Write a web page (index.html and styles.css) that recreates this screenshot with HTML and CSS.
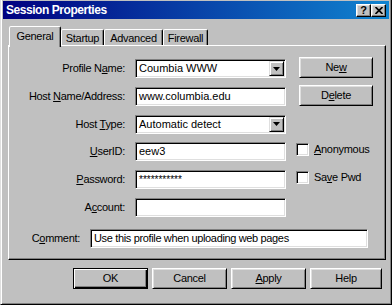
FILE: index.html
```html
<!DOCTYPE html>
<html>
<head>
<meta charset="utf-8">
<link rel="stylesheet" href="styles.css">
</head>
<body>
<div class="window">
  <div class="titlebar">
    <span class="title">Session Properties</span>
    <div class="tbtns">
      <span class="tbtn help">?</span>
      <span class="tbtn close"><svg width="8" height="7" viewBox="0 0 8 7"><path d="M0.5 0 L7.5 7 M7.5 0 L0.5 7" stroke="#000" stroke-width="1.7" fill="none"/></svg></span>
    </div>
  </div>
  <div class="tabs">
    <div class="tab active t-general">General</div>
    <div class="tab t-startup">Startup</div>
    <div class="tab t-advanced">Advanced</div>
    <div class="tab t-firewall">Firewall</div>
  </div>
  <div class="panel">
    <div class="grid">
      <label class="lbl">Profile N<u>a</u>me:</label>
      <div class="field combo"><span class="val">Coumbia WWW</span><span class="drop"><svg width="7" height="4" viewBox="0 0 7 4"><polygon points="0,0 7,0 3.5,4" fill="#000"/></svg></span></div>
      <div class="btn side">Ne<u>w</u></div>

      <label class="lbl">Host <u>N</u>ame/Address:</label>
      <div class="field"><span class="val">www.columbia.edu</span></div>
      <div class="btn side">D<u>e</u>lete</div>

      <label class="lbl">Host <u>T</u>ype:</label>
      <div class="field combo"><span class="val">Automatic detect</span><span class="drop"><svg width="7" height="4" viewBox="0 0 7 4"><polygon points="0,0 7,0 3.5,4" fill="#000"/></svg></span></div>
      <div></div>

      <label class="lbl"><u>U</u>serID:</label>
      <div class="field"><span class="val">eew3</span></div>
      <div class="check"><span class="box"></span><span><u>A</u>nonymous</span></div>

      <label class="lbl"><u>P</u>assword:</label>
      <div class="field"><span class="val pw">***********</span></div>
      <div class="check"><span class="box"></span><span>Sa<u>v</u>e Pwd</span></div>

      <label class="lbl">A<u>c</u>count:</label>
      <div class="field"></div>
      <div></div>
    </div>
    <div class="comment-row">
      <label class="lbl comment-lbl">C<u>o</u>mment:</label>
      <div class="field comment"><span class="val comment-val">Use this profile when uploading web pages</span></div>
    </div>
  </div>
  <div class="actions">
    <div class="btn act default">OK</div>
    <div class="btn act">Cancel</div>
    <div class="btn act"><u>A</u>pply</div>
    <div class="btn act act-help">Help</div>
  </div>
</div>
</body>
</html>
```
FILE: styles.css
```css
* { box-sizing: border-box; }
html, body { margin: 0; padding: 0; }
body {
  width: 392px;
  height: 305px;
  overflow: hidden;
  background: #c0c0c0;
  font-family: "Liberation Sans", Arial, sans-serif;
  font-size: 11px;
  line-height: 13px;
  color: #000;
  letter-spacing: -0.3px;
}
.window {
  width: 392px;
  height: 305px;
  background: #c0c0c0;
  border: 1px solid;
  border-color: #dfdfdf #000 #000 #dfdfdf;
  border-top: 0;
  box-shadow: inset 1px 0 #fff, inset -1px -1px #808080;
  padding: 1px 2px 0 2px;
  display: flex;
  flex-direction: column;
}
.titlebar {
  height: 18px;
  background: linear-gradient(to right, #000080, #1084d0);
  display: flex;
  align-items: center;
  justify-content: space-between;
  padding: 0 3px 0 3px;
  color: #fff;
}
.title {
  font-weight: bold;
  font-size: 12px;
  letter-spacing: -0.45px;
}
.tbtns { display: flex; }
.tbtn {
  width: 15px;
  height: 13px;
  background: #c0c0c0;
  border: 1px solid;
  border-color: #fff #000 #000 #fff;
  box-shadow: inset -1px -1px #808080, inset 1px 1px #dfdfdf;
  display: flex;
  align-items: center;
  justify-content: center;
  color: #000;
}
.tbtn.help {
  font-weight: bold;
  font-size: 11px;
  line-height: 11px;
  letter-spacing: 0;
}
.tbtn svg { display: block; }
.tabs {
  margin-top: 7px;
  height: 19px;
  display: flex;
  align-items: flex-end;
  padding-left: 6px;
}
.tab {
  height: 16px;
  border: 1px solid;
  border-bottom: 0;
  border-color: #fff #000 transparent #fff;
  border-radius: 2px 2px 0 0;
  box-shadow: inset -1px 0 #808080;
  background: #c0c0c0;
  text-align: center;
  padding-top: 2px;
}
.tab.active {
  height: 21px;
  margin-bottom: -2px;
  padding-top: 3px;
  position: relative;
  z-index: 1;
}
.t-general { width: 52px; }
.t-startup { width: 43px; }
.t-advanced { width: 59px; }
.t-firewall { width: 45px; }
.panel {
  margin: 0 3px 0 5px;
  border: 1px solid;
  border-color: #fff #000 #000 #fff;
  box-shadow: inset -1px -1px #808080;
  padding: 13px 0 11px 0;
}
.grid {
  display: grid;
  grid-template-columns: 116px 151px 1fr;
  column-gap: 10px;
  grid-auto-rows: 19px;
  row-gap: 8.8px;
}
.lbl {
  text-align: right;
  align-self: center;
  white-space: nowrap;
}
.field {
  height: 19px;
  background: #fff;
  border: 1px solid;
  border-color: #808080 #fff #fff #808080;
  box-shadow: inset 1px 1px #000, inset -1px -1px #dfdfdf;
  padding: 1px 1px 1px 3px;
  display: flex;
  align-items: center;
  white-space: nowrap;
  overflow: hidden;
}
.val { flex: 1; letter-spacing: 0; }
.comment-val { letter-spacing: -0.35px; }
.pw { font-size: 10px; letter-spacing: 0; }
.drop {
  width: 15px;
  height: 15px;
  background: #c0c0c0;
  border: 1px solid;
  border-color: #dfdfdf #000 #000 #dfdfdf;
  box-shadow: inset 1px 1px #fff, inset -1px -1px #808080;
  display: flex;
  align-items: center;
  justify-content: center;
}
.drop svg { display: block; }
.btn {
  height: 21px;
  background: #c0c0c0;
  border: 1px solid;
  border-color: #fff #000 #000 #fff;
  box-shadow: inset 1px 1px #dfdfdf, inset -1px -1px #808080;
  display: flex;
  align-items: center;
  justify-content: center;
}
.side {
  width: 74px;
  margin-left: 3px;
  margin-top: -2px;
  align-self: start;
}
.check {
  display: flex;
  align-items: center;
  gap: 5px;
  align-self: start;
  margin-top: 1px;
}
.box {
  width: 13px;
  height: 13px;
  background: #fff;
  border: 1px solid;
  border-color: #808080 #fff #fff #808080;
  box-shadow: inset 1px 1px #000, inset -1px -1px #dfdfdf;
}
.comment-row {
  display: flex;
  align-items: center;
  gap: 10px;
  margin-top: 12px;
}
.comment-lbl { width: 71px; }
.comment { width: 278px; }
.actions {
  display: flex;
  justify-content: flex-end;
  gap: 4px;
  margin-top: 8px;
  padding-right: 7px;
}
.act { width: 75px; }
.act-help { width: 72px; }
.default {
  border-color: #000;
  box-shadow: inset 1px 1px #fff, inset -1px -1px #000, inset -2px -2px #808080;
}
```
